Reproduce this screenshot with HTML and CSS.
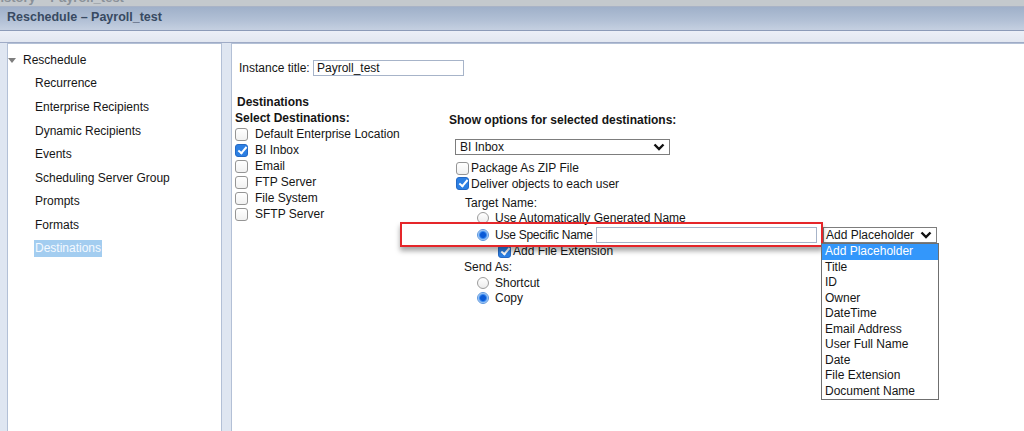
FILE: index.html
```html
<!DOCTYPE html>
<html>
<head>
<meta charset="utf-8">
<link rel="stylesheet" href="styles.css">
</head>
<body>
<div class="strip"><div class="strip-text">History – Payroll_test</div></div>
<div class="titlebar">Reschedule – Payroll_test</div>
<div class="band"></div>
<div class="main">
  <div class="left-panel">
    <div class="tree-root"><span class="tri"></span>Reschedule</div>
    <div class="tree-item">Recurrence</div>
    <div class="tree-item">Enterprise Recipients</div>
    <div class="tree-item">Dynamic Recipients</div>
    <div class="tree-item">Events</div>
    <div class="tree-item">Scheduling Server Group</div>
    <div class="tree-item">Prompts</div>
    <div class="tree-item">Formats</div>
    <div class="tree-item"><span class="selected">Destinations</span></div>
  </div>
  <div class="right-panel">
    <div class="instance-row">
      <span class="label">Instance title:</span>
      <div class="textbox title-box">Payroll_test</div>
    </div>
    <div class="section-title">Destinations</div>
    <div class="dest-columns">
      <div class="col-select">
        <div class="col-heading">Select Destinations:</div>
        <div class="row"><span class="cb"></span><span class="cb-label">Default Enterprise Location</span></div>
        <div class="row"><span class="cb on"></span><span class="cb-label">BI Inbox</span></div>
        <div class="row"><span class="cb"></span><span class="cb-label">Email</span></div>
        <div class="row"><span class="cb"></span><span class="cb-label">FTP Server</span></div>
        <div class="row"><span class="cb"></span><span class="cb-label">File System</span></div>
        <div class="row"><span class="cb"></span><span class="cb-label">SFTP Server</span></div>
      </div>
      <div class="col-options">
        <div class="col-heading opt-heading">Show options for selected destinations:</div>
        <div class="select dest-select">
          <span>BI Inbox</span>
          <svg class="chev" width="12" height="8" viewBox="0 0 12 8"><path d="M1.5 1.5 L6 6 L10.5 1.5" fill="none" stroke="#111" stroke-width="2.4"/></svg>
        </div>
        <div class="row opt-row pkg"><span class="cb"></span><span class="cb-label2">Package As ZIP File</span></div>
        <div class="row opt-row deliver"><span class="cb on"></span><span class="cb-label2">Deliver objects to each user</span></div>
        <div class="row target">Target Name:</div>
        <div class="row radio-row auto"><span class="rb"></span><span class="rb-label">Use Automatically Generated Name</span></div>
        <div class="row radio-row specific">
          <span class="rb on"></span><span class="rb-label spec-label">Use Specific Name</span>
          <div class="textbox name-box"></div>
          <div class="ph-wrap">
            <div class="select ph-select">
              <span>Add Placeholder</span>
              <svg class="chev" width="12" height="8" viewBox="0 0 12 8"><path d="M1.5 1.5 L6 6 L10.5 1.5" fill="none" stroke="#111" stroke-width="2.4"/></svg>
            </div>
            <div class="ph-list">
              <div class="ph-item hl">Add Placeholder</div>
              <div class="ph-item">Title</div>
              <div class="ph-item">ID</div>
              <div class="ph-item">Owner</div>
              <div class="ph-item">DateTime</div>
              <div class="ph-item">Email Address</div>
              <div class="ph-item">User Full Name</div>
              <div class="ph-item">Date</div>
              <div class="ph-item">File Extension</div>
              <div class="ph-item">Document Name</div>
            </div>
          </div>
          <div class="redbox"></div>
        </div>
        <div class="row ext-row"><span class="cb on"></span><span class="cb-label2">Add File Extension</span></div>
        <div class="row sendas">Send As:</div>
        <div class="row radio-row shortcut"><span class="rb"></span><span class="rb-label">Shortcut</span></div>
        <div class="row radio-row copy"><span class="rb on"></span><span class="rb-label">Copy</span></div>
      </div>
    </div>
  </div>
</div>
</body>
</html>
```
FILE: styles.css
```css
html, body {
  margin: 0;
  padding: 0;
  background: #ffffff;
  width: 1024px;
  height: 431px;
  overflow: hidden;
  font-family: "Liberation Sans", Arial, sans-serif;
  font-size: 12px;
  color: #151515;
}

.strip {
  height: 6px;
  background: #c4c9cd;
  border-bottom: 1px solid #a9b3c6;
  overflow: hidden;
}
.strip-text {
  margin-top: -10px;
  margin-left: -9px;
  font-weight: bold;
  font-size: 13px;
  line-height: 15px;
  color: #8a9199;
}

.titlebar {
  height: 23px;
  line-height: 21px;
  padding-left: 7px;
  font-weight: bold;
  font-size: 12.5px;
  color: #384a62;
  background: linear-gradient(#9fb0c9, #b3c1d6 60%, #c5d0e1);
  border-bottom: 1px solid #8c9bb8;
}

.band {
  height: 11px;
  background: linear-gradient(#eceff7, #e2e7f1);
  border-bottom: 1px solid #9fabc6;
}

.main {
  display: flex;
  height: 388px;
  background: #dfe6f1;
}

.left-panel {
  margin-left: 7px;
  width: 215px;
  background: #ffffff;
  border: 1px solid #b3c0d6;
  border-bottom: none;
  padding-top: 4px;
  box-sizing: border-box;
  height: 388px;
  flex: none;
}

.tree-root, .tree-item {
  height: 23.6px;
  display: flex;
  align-items: center;
}
.tree-root {
  padding-left: 0px;
}
.tri {
  width: 0;
  height: 0;
  border-left: 4px solid transparent;
  border-right: 4px solid transparent;
  border-top: 5px solid #7e7e7e;
  margin-right: 7px;
  margin-top: 1px;
}
.tree-item {
  padding-left: 27px;
}
.selected {
  background: #a3cdf0;
  color: #f4f9ff;
  padding: 1px 1px;
  line-height: 15px;
  margin-left: -1px;
}

.right-panel {
  margin-left: 9px;
  flex: 1;
  background: #ffffff;
  border-left: 1px solid #b3c0d6;
  border-top: 1px solid #b3c0d6;
  padding-left: 3px;
  box-sizing: border-box;
  height: 388px;
}

.instance-row {
  margin-top: 16px;
  margin-left: 4px;
  height: 16px;
  display: flex;
  align-items: center;
}
.label {
  width: 74px;
}
.textbox {
  height: 16px;
  box-sizing: border-box;
  border: 1px solid #a7b4c9;
  background: #fff;
  line-height: 14px;
  padding-left: 3px;
}
.title-box {
  width: 151px;
}

.section-title {
  margin-top: 18px;
  margin-left: 2px;
  height: 16px;
  line-height: 16px;
  font-weight: bold;
}

.dest-columns {
  display: flex;
}
.col-select {
  width: 214px;
  flex: none;
}
.col-heading {
  height: 16px;
  line-height: 16px;
  font-weight: bold;
}
.opt-heading {
  margin-top: 2px;
}
.col-options {
  flex: 1;
}

.row {
  height: 16px;
  display: flex;
  align-items: center;
  line-height: 16px;
}

.cb {
  display: inline-block;
  position: relative;
  width: 13px;
  height: 13px;
  box-sizing: border-box;
  border: 1px solid #959595;
  border-radius: 3px;
  background: linear-gradient(#ffffff, #f1f1f1);
  flex: none;
}
.cb.on {
  background: #2c7fe3;
  border-color: #2569c4;
}
.cb.on::after {
  content: "";
  position: absolute;
  left: 3.5px;
  top: 0px;
  width: 3px;
  height: 7px;
  border: solid #ffffff;
  border-width: 0 2px 2px 0;
  transform: rotate(40deg);
}
.cb-label {
  margin-left: 7px;
}
.cb-label2 {
  margin-left: 2px;
}

.rb {
  display: inline-block;
  width: 12px;
  height: 12px;
  box-sizing: border-box;
  border-radius: 50%;
  border: 1px solid #9c9c9c;
  background: linear-gradient(#ffffff, #ececec);
  flex: none;
}
.rb.on {
  border-color: #5b96dd;
  background: radial-gradient(circle at 50% 50%, #0a5ad6 0, #0a5ad6 2.5px, #3d8cef 3.5px, #c4dcf8 5px);
}
.rb-label {
  margin-left: 6px;
}
.spec-label {
  letter-spacing: -0.25px;
  width: 101px;
  flex: none;
  white-space: nowrap;
}

.select {
  height: 16px;
  box-sizing: border-box;
  border: 1px solid #7d7d7d;
  background: #fff;
  display: flex;
  align-items: center;
  justify-content: space-between;
  padding-left: 4px;
  padding-right: 4px;
  line-height: 14px;
}
.dest-select {
  margin-top: 11px;
  margin-left: 6px;
  width: 215px;
}

.opt-row {
  margin-left: 7px;
}
.pkg {
  margin-top: 5px;
}
.deliver {
  height: 15px;
}
.target {
  margin-top: 4px;
  margin-left: 16px;
}
.radio-row {
  margin-left: 28px;
}
.auto {
  height: 14px;
}
.specific {
  margin-top: 2px;
  position: relative;
}
.name-box {
  width: 221px;
  margin-left: 0px;
  flex: none;
}
.ph-wrap {
  position: relative;
  margin-left: 6px;
  flex: none;
}
.ph-select {
  width: 114px;
  padding-left: 2px;
}
.ph-list {
  position: absolute;
  left: -2px;
  top: 16px;
  width: 118px;
  box-sizing: border-box;
  border: 1px solid #6f6f6f;
  background: #ffffff;
  z-index: 5;
}
.ph-item {
  height: 15.5px;
  line-height: 15.5px;
  padding-left: 3px;
}
.ph-item.hl {
  background: #3397fb;
  color: #ffffff;
}

.redbox {
  position: absolute;
  left: -77px;
  top: -5px;
  width: 423px;
  height: 25px;
  box-sizing: border-box;
  border: 2px solid #e5262a;
  box-shadow: 0 4px 5px rgba(0, 0, 0, 0.35);
  z-index: 4;
}

.ext-row {
  margin-left: 49px;
}
.sendas {
  margin-left: 15px;
}
.shortcut {
  height: 15px;
}
```
